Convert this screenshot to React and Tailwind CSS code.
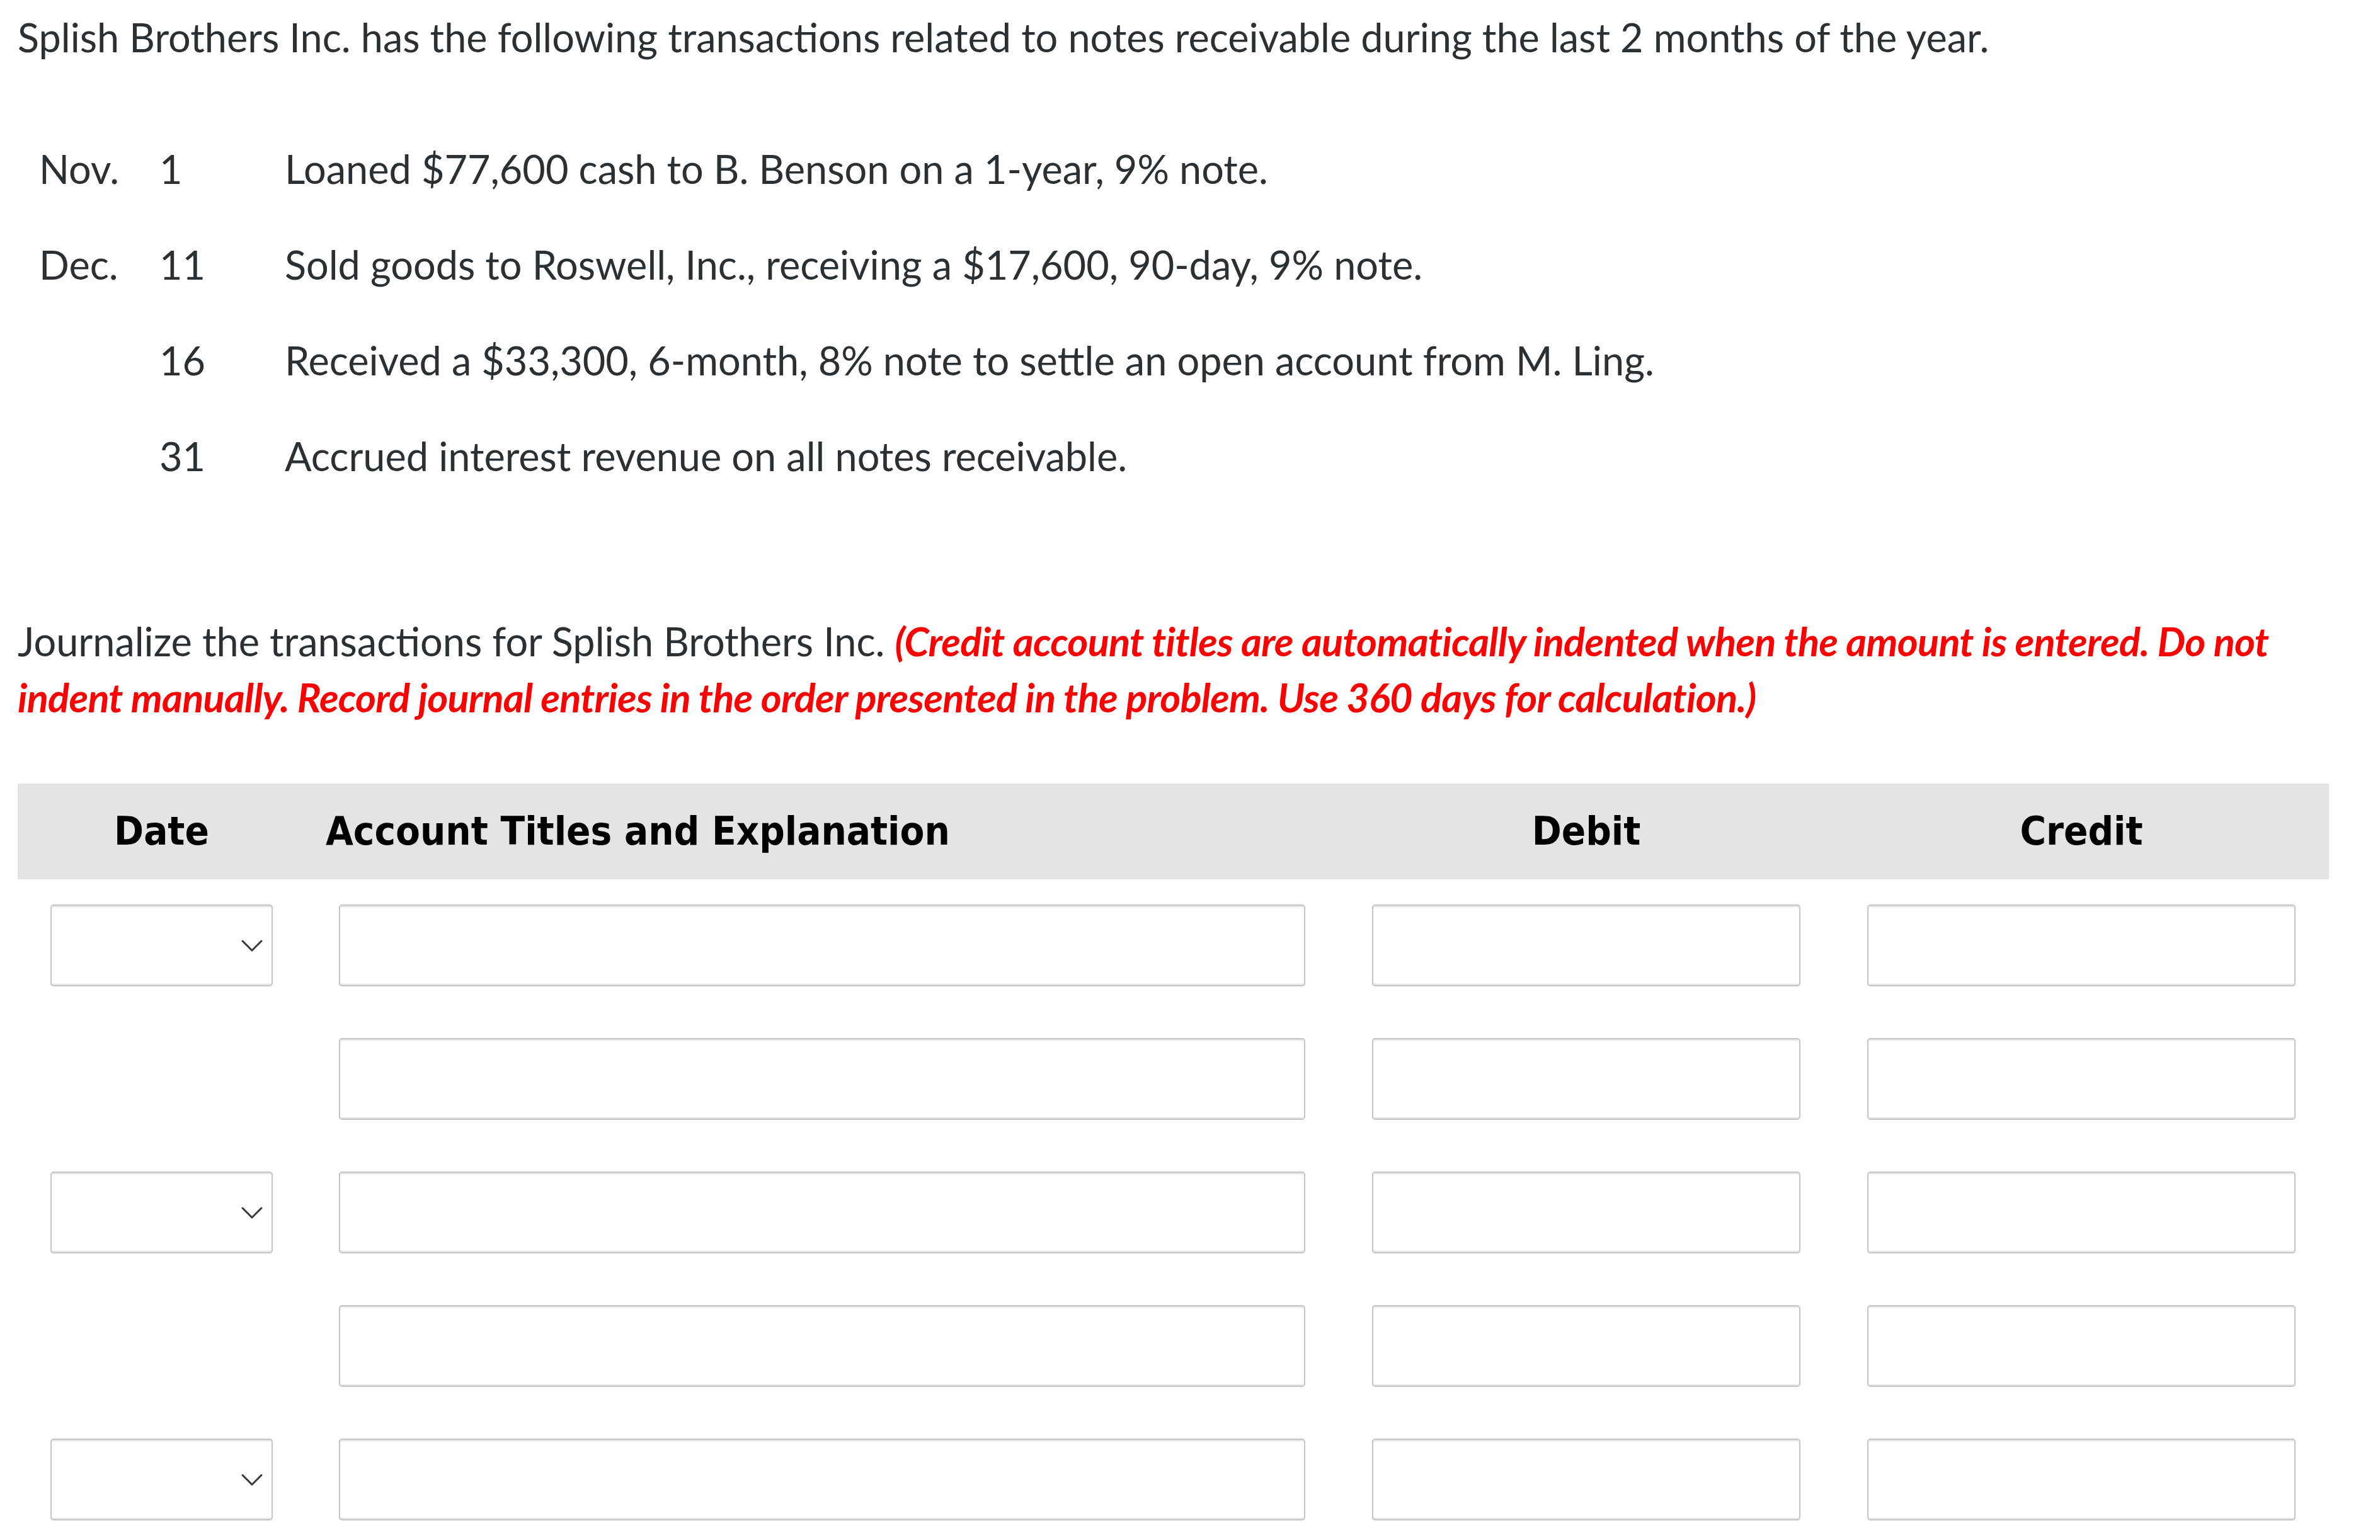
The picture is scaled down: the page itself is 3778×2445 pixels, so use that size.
const transactions = [
  { month: 'Nov.', day: '1', text: 'Loaned $77,600 cash to B. Benson on a 1-year, 9% note.' },
  { month: 'Dec.', day: '11', text: 'Sold goods to Roswell, Inc., receiving a $17,600, 90-day, 9% note.' },
  { month: '', day: '16', text: 'Received a $33,300, 6-month, 8% note to settle an open account from M. Ling.' },
  { month: '', day: '31', text: 'Accrued interest revenue on all notes receivable.' },
];

// date dropdown only on the first line of each entry
const entryRows = [true, false, true, false, true];

const box =
  'h-[130px] rounded-[5px] border-2 border-[#c6c6c6] bg-white shadow-[inset_0_3px_2px_-1px_rgba(0,0,0,0.12),inset_0_-3px_2px_-1px_rgba(0,0,0,0.12)]';

function Chevron() {
  return (
    <svg width="34" height="19" viewBox="0 0 34 19" fill="none" stroke="#3a3a3a" strokeWidth="3" strokeLinecap="round" strokeLinejoin="round">
      <path d="M2 2 L17 17 L32 2" />
    </svg>
  );
}

export default function App() {
  return (
    <div className="min-h-screen w-[3778px] bg-white pl-[28px] text-[63px] text-[#2b3035] [font-family:Lato,'Noto_Sans',sans-serif]">
      <p className="pt-[16px] leading-[85px]">
        Splish Brothers Inc. has the following transactions related to notes receivable during the last 2 months of the year.
      </p>

      {/* transactions */}
      <div className="mt-[124px] flex flex-col gap-[67px] pl-[34px]">
        {transactions.map((t, i) => (
          <div key={i} className="flex leading-[85px]">
            <span className="w-[191px] shrink-0">{t.month}</span>
            <span className="w-[199px] shrink-0">{t.day}</span>
            <span>{t.text}</span>
          </div>
        ))}
      </div>

      <p className="mt-[207px] w-[3669px] leading-[89px]">
        Journalize the transactions for Splish Brothers Inc.{' '}
        <span className="font-bold italic tracking-[-0.7px] text-[#ff0000]">
          (Credit account titles are automatically indented when the amount is entered. Do not indent manually. Record journal entries in the order presented in the problem. Use 360 days for calculation.)
        </span>
      </p>

      {/* journal table */}
      <div className="mt-[93px] w-[3669px]">
        <div className="grid h-[152px] grid-cols-[457px_1640px_786px_786px] items-center bg-[#e4e4e4] text-[63px] font-bold text-black [font-family:'DejaVu_Sans_Condensed','DejaVu_Sans',sans-serif]">
          <div className="text-center">Date</div>
          <div className="pl-[32px]">Account Titles and Explanation</div>
          <div className="text-center">Debit</div>
          <div className="text-center">Credit</div>
        </div>

        <div className="mt-[40px] flex flex-col gap-[82px]">
          {entryRows.map((hasDate, i) => (
            <div key={i} className="grid grid-cols-[457px_1640px_786px_786px]">
              <div className="px-[52px]">
                {hasDate && (
                  <div className={`${box} flex items-center justify-end pr-[14px]`}>
                    <Chevron />
                  </div>
                )}
              </div>
              <div className="px-[53px]">
                <div className={box} />
              </div>
              <div className="px-[53px]">
                <div className={box} />
              </div>
              <div className="px-[53px]">
                <div className={box} />
              </div>
            </div>
          ))}
        </div>
      </div>
    </div>
  );
}
